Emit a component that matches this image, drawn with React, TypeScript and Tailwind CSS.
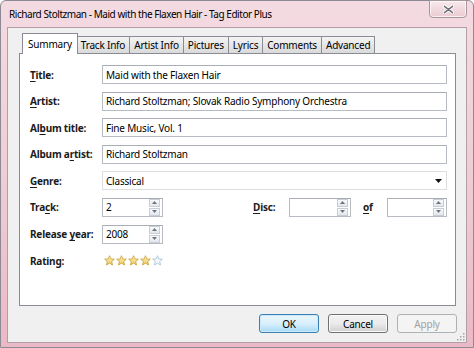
import React from "react";

const font = { fontFamily: '"Noto Sans", "Open Sans", sans-serif' };

function U({ children }: { children: React.ReactNode }) {
  return <span className="underline underline-offset-[1.5px] decoration-[1px]">{children}</span>;
}

function Label({ children }: { children: React.ReactNode }) {
  return (
    <div className="text-[10px] tracking-[-0.2px] font-bold text-[#1b1b1b] leading-none flex items-center h-[19px]">
      <span className="whitespace-pre">{children}</span>
    </div>
  );
}

function TextBox({ value }: { value: string }) {
  return (
    <div className="h-[19px] bg-white border border-[#b7bcc4] border-t-[#a9adb4] flex items-center pl-[3px] text-[10px] tracking-[-0.2px] text-black leading-none">
      {value}
    </div>
  );
}

function SpinArrows() {
  return (
    <div className="flex flex-col gap-[1px] mr-[2px]">
      <div className="w-[11px] h-[8px] border border-[#c9ced6] bg-gradient-to-b from-[#f8f9fb] to-[#e3e7ec] flex items-center justify-center">
        <svg width="5" height="3" viewBox="0 0 5 3"><path d="M0 3 L2.5 0 L5 3 Z" fill="#6d7580" /></svg>
      </div>
      <div className="w-[11px] h-[8px] border border-[#c9ced6] bg-gradient-to-b from-[#f8f9fb] to-[#e3e7ec] flex items-center justify-center">
        <svg width="5" height="3" viewBox="0 0 5 3"><path d="M0 0 L2.5 3 L5 0 Z" fill="#6d7580" /></svg>
      </div>
    </div>
  );
}

function Spin({ value, w }: { value: string; w: string }) {
  return (
    <div className={`h-[19px] ${w} bg-white border border-[#b7bcc4] border-t-[#a9adb4] flex items-center justify-between pl-[3px] text-[10px] tracking-[-0.2px] text-black leading-none`}>
      <span>{value}</span>
      <SpinArrows />
    </div>
  );
}

function Star({ filled }: { filled: boolean }) {
  return (
    <svg width="11" height="11" viewBox="0 0 24 24">
      <defs>
        <linearGradient id="gstar" x1="0" y1="0" x2="0" y2="1">
          <stop offset="0" stopColor="#fff3c0" />
          <stop offset="1" stopColor="#f0c85a" />
        </linearGradient>
      </defs>
      <path
        d="M12 1.5 L15 8.6 L22.6 9.2 L16.8 14.2 L18.6 21.8 L12 17.8 L5.4 21.8 L7.2 14.2 L1.4 9.2 L9 8.6 Z"
        fill={filled ? "url(#gstar)" : "#f4f8fc"}
        stroke={filled ? "#c7a13c" : "#a9bfd6"}
        strokeWidth="1.8"
        strokeLinejoin="round"
      />
    </svg>
  );
}

function Tab({ label, selected }: { label: string; selected?: boolean }) {
  if (selected) {
    return (
      <div className="h-[21px] -mb-[1px] px-[5px] bg-white border border-[#898c95] border-b-0 flex items-center text-[10px] tracking-[-0.2px] text-black leading-none relative z-10 -mr-[1px]">
        {label}
      </div>
    );
  }
  return (
    <div className="h-[17px] px-[4px] bg-gradient-to-b from-[#f4f4f4] to-[#dadada] border border-[#898c95] border-b-0 -ml-[1px] first:ml-0 flex items-center text-[10px] tracking-[-0.2px] text-black leading-none">
      {label}
    </div>
  );
}

function Button({ label, kind }: { label: string; kind: "ok" | "cancel" | "apply" }) {
  const cls =
    kind === "ok"
      ? "border-[#3c7fb1] bg-gradient-to-b from-[#eaf6fd] via-[#d9f0fc] to-[#a7d9f5] shadow-[inset_0_0_0_1px_#cdeafd] text-black"
      : kind === "cancel"
      ? "border-[#707070] bg-gradient-to-b from-[#f2f2f2] via-[#ebebeb] to-[#cfcfcf] shadow-[inset_0_0_0_1px_#fbfbfb] text-black"
      : "border-[#adb2b5] bg-[#f4f4f4] text-[#a0a0a0]";
  return (
    <div className={`w-[60px] h-[19px] rounded-[3px] border flex items-center justify-center text-[10px] tracking-[-0.2px] leading-none ${cls}`}>
      {label}
    </div>
  );
}

export default function App() {
  return (
    <div style={font} className="w-[474px] h-[348px] bg-white">
      <div className="w-[474px] h-[348px] flex flex-col rounded-t-[6px] border border-[#8d8a93] bg-gradient-to-b from-[#f4dbe1] via-[#efcdd6] to-[#eab9c6] px-[6px] pb-[4px]">
        <div className="h-[26px] flex items-start justify-between">
          <div className="pt-[8px] pl-[2px] text-[10px] tracking-[-0.45px] text-black leading-none">
            Richard Stoltzman - Maid with the Flaxen Hair - Tag Editor Plus
          </div>
          <div className="w-[38px] h-[18px] -mt-[1px] rounded-b-[4px] border border-[#a8969d] bg-gradient-to-b from-[#f7e9ec] to-[#ebcbd3] shadow-[inset_0_0_0_1px_rgba(255,255,255,0.7)] flex items-center justify-center">
            <svg width="11" height="9" viewBox="0 0 11 9">
              <path d="M1 1 L10 8 M10 1 L1 8" stroke="#ffffff" strokeWidth="3.2" strokeLinecap="round" />
              <path d="M1.5 1.3 L9.5 7.7 M9.5 1.3 L1.5 7.7" stroke="#6f6f78" strokeWidth="1.5" strokeLinecap="round" />
            </svg>
          </div>
        </div>
        <div className="flex-1 flex flex-col bg-[#f0f0f0] border border-[#b49ea6]">
          <div className="flex flex-col pl-[11px] pr-[10px] pt-[5px]">
            <div className="flex items-end h-[20px] pl-[3px]">
              <Tab label="Summary" selected />
              <Tab label="Track Info" />
              <Tab label="Artist Info" />
              <Tab label="Pictures" />
              <Tab label="Lyrics" />
              <Tab label="Comments" />
              <Tab label="Advanced" />
            </div>
            <div className="h-[253px] bg-white border border-[#898c95] pl-[10px] pr-[8px] pt-[11px]">
              <div className="grid grid-cols-[72px_1fr] gap-y-[7.6px]">
                <Label><U>T</U>itle:</Label>
                <TextBox value="Maid with the Flaxen Hair" />
                <Label><U>A</U>rtist:</Label>
                <TextBox value="Richard Stoltzman; Slovak Radio Symphony Orchestra" />
                <Label>Al<U>b</U>um title:</Label>
                <TextBox value="Fine Music, Vol. 1" />
                <Label>Album a<U>r</U>tist:</Label>
                <TextBox value="Richard Stoltzman" />
                <Label><U>G</U>enre:</Label>
                <div className="h-[19px] bg-white border border-[#dedede] flex items-center justify-between pl-[3px] pr-[4px] text-[10px] tracking-[-0.2px] text-black leading-none">
                  <span>Classical</span>
                  <svg width="7" height="4" viewBox="0 0 7 4"><path d="M0 0 L7 0 L3.5 4 Z" fill="#111" /></svg>
                </div>
                <Label>Tra<U>c</U>k:</Label>
                <div className="flex items-center">
                  <Spin value="2" w="w-[61px]" />
                  <div className="ml-[90px] w-[36px]"><Label><U>D</U>isc:</Label></div>
                  <Spin value="" w="w-[62px]" />
                  <div className="ml-[12px] w-[24px]"><Label><U>o</U>f</Label></div>
                  <Spin value="" w="w-[60px]" />
                </div>
                <Label>Release <U>y</U>ear:</Label>
                <Spin value="2008" w="w-[61px]" />
                <Label>Rating:</Label>
                <div className="flex items-center gap-[1px] pl-[2px] h-[19px]">
                  <Star filled />
                  <Star filled />
                  <Star filled />
                  <Star filled />
                  <Star filled={false} />
                </div>
              </div>
            </div>
          </div>
          <div className="flex justify-end gap-[9px] pr-[9px] pt-[8px]">
            <Button label="OK" kind="ok" />
            <Button label="Cancel" kind="cancel" />
            <Button label="Apply" kind="apply" />
          </div>
          <div className="flex-1 flex justify-end items-end pr-[1px] pb-[1px]">
            <svg width="8" height="8" viewBox="0 0 8 8">
              <rect x="6" y="0" width="1.5" height="1.5" fill="#a5a5a5" />
              <rect x="3" y="3" width="1.5" height="1.5" fill="#a5a5a5" />
              <rect x="6" y="3" width="1.5" height="1.5" fill="#a5a5a5" />
              <rect x="0" y="6" width="1.5" height="1.5" fill="#a5a5a5" />
              <rect x="3" y="6" width="1.5" height="1.5" fill="#a5a5a5" />
              <rect x="6" y="6" width="1.5" height="1.5" fill="#a5a5a5" />
            </svg>
          </div>
        </div>
      </div>
    </div>
  );
}
